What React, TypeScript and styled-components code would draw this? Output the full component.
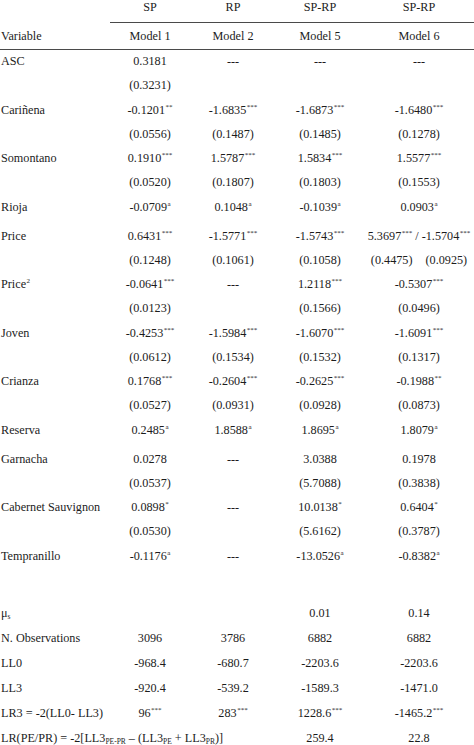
import React from 'react';
import styled, { createGlobalStyle } from 'styled-components';

const GlobalStyle = createGlobalStyle`
  html, body {
    margin: 0;
    padding: 0;
    background: #ffffff;
  }
  body {
    font-family: "Liberation Serif", "Times New Roman", serif;
    font-size: 12.2px;
    color: #1c1c1c;
    overflow: hidden;
  }
`;

const COLS = '110px 80px 86px 88px 110px';

const Table = styled.div`
  width: 474px;
  display: flex;
  flex-direction: column;
`;

const HeadTop = styled.div`
  display: grid;
  grid-template-columns: ${COLS};
  height: 16px;
  padding-bottom: 6px;
`;

const HeadRule = styled.div`
  border-top: 1px solid #4a4a4a;
  margin-left: 110px;
  height: 0;
`;

const HeadBottom = styled.div`
  display: grid;
  grid-template-columns: ${COLS};
  height: 20px;
  line-height: 20px;
  padding-top: 3px;
  padding-bottom: 3px;
  border-bottom: 1px solid #4a4a4a;
`;

const Row = styled.div<{ $h: number }>`
  display: grid;
  grid-template-columns: ${COLS};
  height: ${(p) => p.$h}px;
  line-height: ${(p) => p.$h}px;
  white-space: nowrap;
`;

const Block = styled.div<{ $pad: number }>`
  padding-bottom: ${(p) => p.$pad}px;
`;

const Label = styled.div<{ $span?: number }>`
  padding-left: 1px;
  grid-column: ${(p) => (p.$span ? `1 / span ${p.$span}` : 'auto')};
`;

const Cell = styled.div`
  text-align: center;
`;

const Sup = styled.sup`
  font-size: 7px;
  line-height: 0;
  vertical-align: 5px;
  margin-left: 0.5px;
`;

const Sub = styled.sub`
  font-size: 7.5px;
  line-height: 0;
  vertical-align: -1.5px;
`;

const Pair = styled.div`
  display: flex;
  justify-content: center;
  gap: 13px;
`;

const Spacer = styled.div`
  height: 27px;
`;

// "1.5787***" -> value + superscript; "0.1048a" -> value + "a"
const renderVal = (s: string) => {
  const m = s.match(/^(.*?\d)(\*+|a)$/);
  if (!m) return s;
  return (
    <>
      {m[1]}
      <Sup>{m[2]}</Sup>
    </>
  );
};

type Variable = {
  name: React.ReactNode;
  coef: string[];
  se?: string[];
};

const VARIABLES: Variable[] = [
  { name: 'ASC', coef: ['0.3181', '---', '---', '---'], se: ['(0.3231)', '', '', ''] },
  {
    name: 'Cariñena',
    coef: ['-0.1201**', '-1.6835***', '-1.6873***', '-1.6480***'],
    se: ['(0.0556)', '(0.1487)', '(0.1485)', '(0.1278)'],
  },
  {
    name: 'Somontano',
    coef: ['0.1910***', '1.5787***', '1.5834***', '1.5577***'],
    se: ['(0.0520)', '(0.1807)', '(0.1803)', '(0.1553)'],
  },
  { name: 'Rioja', coef: ['-0.0709a', '0.1048a', '-0.1039a', '0.0903a'] },
  {
    name: 'Price',
    coef: ['0.6431***', '-1.5771***', '-1.5743***', '5.3697*** / -1.5704***'],
    se: ['(0.1248)', '(0.1061)', '(0.1058)', '(0.4475)|(0.0925)'],
  },
  {
    name: (
      <>
        Price<Sup>2</Sup>
      </>
    ),
    coef: ['-0.0641***', '---', '1.2118***', '-0.5307***'],
    se: ['(0.0123)', '', '(0.1566)', '(0.0496)'],
  },
  {
    name: 'Joven',
    coef: ['-0.4253***', '-1.5984***', '-1.6070***', '-1.6091***'],
    se: ['(0.0612)', '(0.1534)', '(0.1532)', '(0.1317)'],
  },
  {
    name: 'Crianza',
    coef: ['0.1768***', '-0.2604***', '-0.2625***', '-0.1988**'],
    se: ['(0.0527)', '(0.0931)', '(0.0928)', '(0.0873)'],
  },
  { name: 'Reserva', coef: ['0.2485a', '1.8588a', '1.8695a', '1.8079a'] },
  {
    name: 'Garnacha',
    coef: ['0.0278', '---', '3.0388', '0.1978'],
    se: ['(0.0537)', '', '(5.7088)', '(0.3838)'],
  },
  {
    name: 'Cabernet Sauvignon',
    coef: ['0.0898*', '---', '10.0138*', '0.6404*'],
    se: ['(0.0530)', '', '(5.6162)', '(0.3787)'],
  },
  { name: 'Tempranillo', coef: ['-0.1176a', '---', '-13.0526a', '-0.8382a'] },
];

const renderCell = (s: string, i: number) => {
  if (s.includes('|')) {
    const [a, b] = s.split('|');
    return (
      <Pair key={i}>
        <span>{a}</span>
        <span>{b}</span>
      </Pair>
    );
  }
  if (s.includes(' / ')) {
    const [a, b] = s.split(' / ');
    return (
      <Cell key={i}>
        {renderVal(a)} / {renderVal(b)}
      </Cell>
    );
  }
  return <Cell key={i}>{renderVal(s)}</Cell>;
};

const STATS: { name: React.ReactNode; values: string[] }[] = [
  {
    name: (
      <>
        μ<Sub>s</Sub>
      </>
    ),
    values: ['', '', '0.01', '0.14'],
  },
  { name: 'N. Observations', values: ['3096', '3786', '6882', '6882'] },
  { name: 'LL0', values: ['-968.4', '-680.7', '-2203.6', '-2203.6'] },
  { name: 'LL3', values: ['-920.4', '-539.2', '-1589.3', '-1471.0'] },
  { name: 'LR3 = -2(LL0- LL3)', values: ['96***', '283***', '1228.6***', '-1465.2***'] },
];

const App = () => {
  return (
    <>
      <GlobalStyle />
      <Table>
        <HeadTop>
          <div />
          <Cell>SP</Cell>
          <Cell>RP</Cell>
          <Cell>SP-RP</Cell>
          <Cell>SP-RP</Cell>
        </HeadTop>
        <HeadRule />
        <HeadBottom>
          <Label>Variable</Label>
          <Cell>Model 1</Cell>
          <Cell>Model 2</Cell>
          <Cell>Model 5</Cell>
          <Cell>Model 6</Cell>
        </HeadBottom>

        {VARIABLES.map((v, i) => (
          <Block key={i} $pad={v.se ? 1.5 : 6}>
            <Row $h={23}>
              <Label>{v.name}</Label>
              {v.coef.map(renderCell)}
            </Row>
            {v.se && (
              <Row $h={24}>
                <div />
                {v.se.map(renderCell)}
              </Row>
            )}
          </Block>
        ))}

        <Spacer />

        {STATS.map((s, i) => (
          <Row key={i} $h={25}>
            <Label>{s.name}</Label>
            {s.values.map(renderCell)}
          </Row>
        ))}
        <Row $h={24}>
          <Label $span={3}>
            LR(PE/PR) = -2[LL3<Sub>PE-PR</Sub> – (LL3<Sub>PE</Sub> + LL3<Sub>PR</Sub>)]
          </Label>
          <Cell>259.4</Cell>
          <Cell>22.8</Cell>
        </Row>
      </Table>
    </>
  );
};

export default App;
